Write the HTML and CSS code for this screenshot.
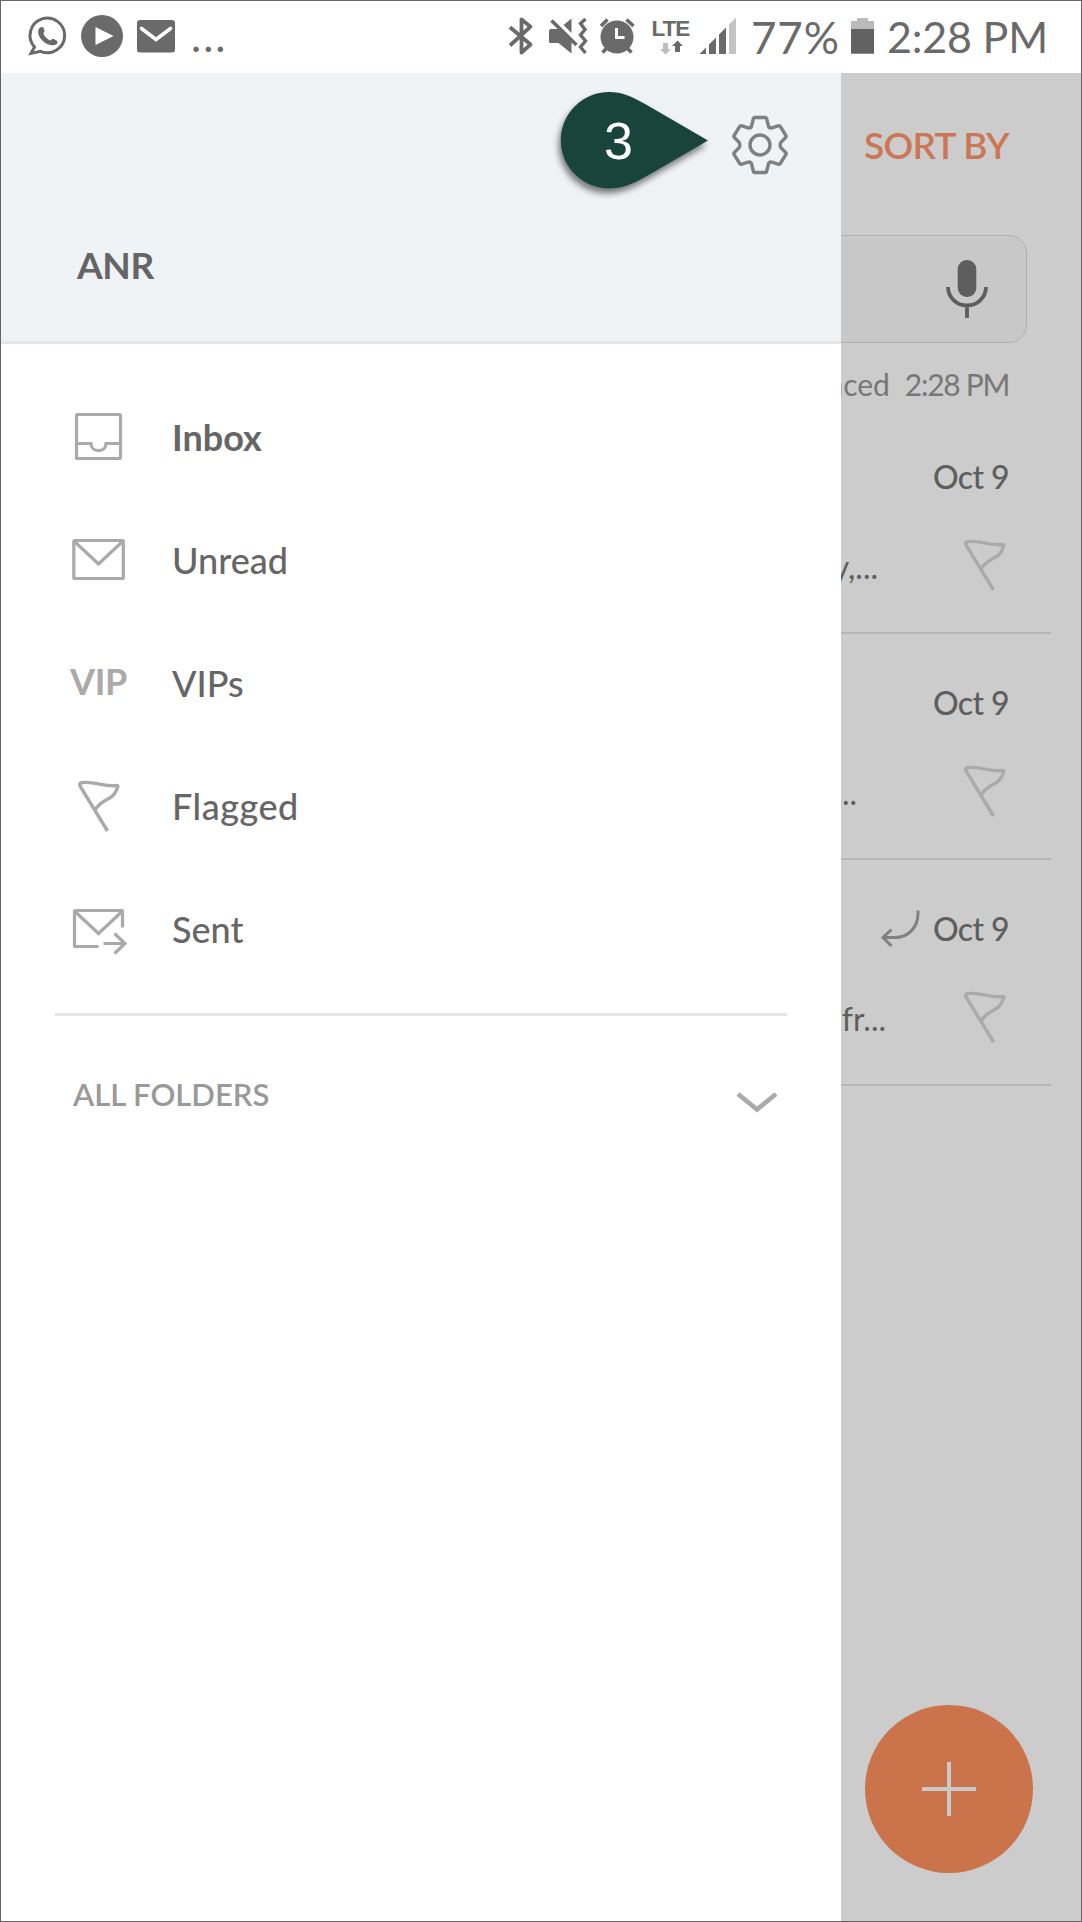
FILE: index.html
```
<!DOCTYPE html>
<html lang="en">
<head>
	<meta charset="utf-8">
	<title>Email</title>
	<link rel="stylesheet" href="styles.css">
</head>
<body>
	<svg class="defs" width="0" height="0">
		<symbol id="flag" viewBox="0 0 46 56">
			<path d="M32.5 52 L5 7 Q3.500 3.700 8 3.500 C22 2.500 28 8 42 6.500 Q43.500 6.500 42.500 8.500 C38 23 28 18 20.500 30.500"/>
		</symbol>
	</svg>
	<div class="phone">
		<div class="statusbar">
			<div class="notify">
				<!-- whatsapp -->
				<svg width="46" height="72" viewBox="26 1 46 72">
					<path d="M34.500 47 A17.300 17.300 0 1 1 40.500 51.300 L31 53.400 Z" fill="none" stroke="#6a6a6a" stroke-width="3"/>
					<path d="M38.500 29.500 C39.500 27 42.500 26 43.500 28 C45 31 44.800 31.500 43.300 33.500 C44.500 36.500 47.500 39.500 50.500 40.500 C52.500 38.500 53 38.700 56 40.300 C58.500 41.500 57.500 44 55.500 44.800 C47 47.500 36 37 38.500 29.500 Z" fill="#6a6a6a"/>
				</svg>
				<svg width="60" height="72" viewBox="72 1 60 72">
					<circle cx="102" cy="36" r="21" fill="#6a6a6a"/>
					<path d="M95.500 27 L113.500 36 L95.500 45 Z" fill="#fff"/>
				</svg>
				<svg width="58" height="72" viewBox="132 1 58 72">
					<rect x="137" y="20" width="38" height="32.500" rx="3" fill="#6a6a6a"/>
					<path d="M141.500 28.500 L156 39.500 L170.500 28.500" fill="none" stroke="#fff" stroke-width="3.600" stroke-linecap="round"/>
				</svg>
				<span class="more">...</span>
			</div>
			<div class="system">
				<svg width="40" height="72" viewBox="505 1 40 72">
					<path d="M510 45.500 L530.500 26.700 L521.500 19.500 V52.500 L530.500 44.500 L510 27.300" fill="none" stroke="#6a6a6a" stroke-width="3.800" stroke-linejoin="round"/>
				</svg>
				<!-- muted, vibrate -->
				<svg width="52" height="72" viewBox="545 1 52 72">
					<path d="M551 29 H560 L571.500 41 V53.500 L558.500 43 H550.500 Q549 43 549 41.500 V31 Q549 29 551 29 Z M571.500 18.500 V33 L563.500 25 Z" fill="#6a6a6a"/>
					<path d="M551.500 20.500 L576.500 45" fill="none" stroke="#6a6a6a" stroke-width="3.600"/>
					<path d="M585.500 19 L580.500 23.500 L585 29.500 L580.500 35 L585.500 41 L580.500 47 L585.500 53" fill="none" stroke="#6a6a6a" stroke-width="3.400"/>
				</svg>
				<svg width="47" height="72" viewBox="597 1 47 72">
					<circle cx="617" cy="37" r="16.500" fill="#6a6a6a"/>
					<path d="M601 26 L607.500 19.500 M626.500 19.500 L633.500 26 M607 48 L602.500 52.500 M627 48 L631.500 52.500" stroke="#6a6a6a" stroke-width="3.600"/>
					<path d="M616.500 28 V37.500 H624.500" fill="none" stroke="#fff" stroke-width="3"/>
				</svg>
				<svg width="52" height="72" viewBox="644 1 52 72">
					<text class="lte" x="651.500" y="36">LTE</text>
					<path d="M663 43 h5 v6 h3 l-5.500 5.500 l-5.500 -5.500 h3 Z" fill="#bdbdbd"/>
					<path d="M675 52 h5 v-6 h3 l-5.500 -5.500 l-5.500 5.500 h3 Z" fill="#6a6a6a"/>
				</svg>
				<svg width="55" height="72" viewBox="696 1 55 72">
					<path d="M699.500 54 L706 47.500 V54 Z M709 54 V44.500 L716 37.500 V54 Z M719 54 V34.500 L726 27.500 V54 Z" fill="#6a6a6a"/>
					<path d="M729 54 V24.500 L736 17.500 V54 Z" fill="#c3c3c3"/>
				</svg>
				<span class="percent">77%</span>
				<svg width="38" height="72" viewBox="845 1 38 72">
					<path d="M857 18 H868 V21 H874 V54 H851 V21 H857 Z" fill="#bababa"/>
					<rect x="851" y="29" width="23" height="24.500" fill="#626262"/>
				</svg>
				<span class="clock">2:28 PM</span>
			</div>
		</div>

		<div class="main">
			<div class="drawer">
				<div class="account">
					<div class="tools">
						<svg class="gear" width="64" height="64" viewBox="728 113 64 64">
							<path d="M755 117.500 H765 Q766.500 117.500 766.700 119 L768.300 125.500 Q769 128.500 772 127.800 L778 125.800 Q779.500 125.400 780.300 126.500 L785.800 135.300 Q786.600 136.500 785.600 137.500 L781.200 142 Q779 145 781.200 148 L785.600 152.500 Q786.600 153.500 785.800 154.700 L780.300 163.500 Q779.500 164.600 778 164.200 L772 162.200 Q769 161.500 768.300 164.500 L766.700 171 Q766.500 172.500 765 172.500 H755 Q753.500 172.500 753.300 171 L751.700 164.500 Q751 161.500 748 162.200 L742 164.200 Q740.500 164.600 739.700 163.500 L734.200 154.700 Q733.400 153.500 734.400 152.500 L738.800 148 Q741 145 738.800 142 L734.400 137.500 Q733.400 136.500 734.200 135.300 L739.700 126.500 Q740.500 125.400 742 125.800 L748 127.800 Q751 128.500 751.700 125.500 L753.300 119 Q753.500 117.500 755 117.500 Z"/>
							<circle cx="760" cy="145" r="10"/>
						</svg>
					</div>
					<div class="name">ANR</div>
				</div>
				<ul class="menu">
					<li class="active">
						<svg class="icon" width="64" height="63" viewBox="0 0 64 63">
							<rect x="12.500" y="8.500" width="44" height="44" rx="1"/>
							<path d="M12.500 37.500 H27 C27 47 42 47 42 37.500 H56.500"/>
						</svg>
						<span>Inbox</span>
					</li>
					<li>
						<svg class="icon" width="64" height="63" viewBox="0 0 64 63">
							<rect x="9.800" y="11.500" width="49.500" height="38" rx="1"/>
							<path d="M10.500 12.500 L34.500 35 L58.500 12.500"/>
						</svg>
						<span>Unread</span>
					</li>
					<li>
						<b class="vip">VIP</b>
						<span>VIPs</span>
					</li>
					<li>
						<svg class="icon flag" width="64" height="63" viewBox="0 0 64 63">
							<use href="#flag" x="11" y="4" width="46" height="56"/>
						</svg>
						<span class="wide">Flagged</span>
					</li>
					<li>
						<svg class="icon" width="64" height="63" viewBox="0 0 64 63">
							<path d="M34.500 48.500 H11.500 Q10.500 48.500 10.500 47.500 V13 Q10.500 12.500 11.500 12.500 H57.500 Q58.500 12.500 58.500 13 V29.500"/>
							<path d="M11 13.500 L34.500 35.500 L58 13.500"/>
							<path d="M39.500 45.500 H61 M50.500 35.500 L61 45.500 L50.500 55.500"/>
						</svg>
						<span>Sent</span>
					</li>
				</ul>
				<div class="folders">
					<span>ALL FOLDERS</span>
					<svg width="42" height="24" viewBox="0 0 42 24">
						<path d="M2 3 L21 18.500 L40 3" fill="none" stroke="#aaa" stroke-width="4.600"/>
					</svg>
				</div>
				<!-- step marker -->
				<div class="pin">
					<svg width="170" height="120" viewBox="550 82 170 120">
						<path d="M707 140.500 L645 104.500 C631 96.500 621 92 608 92 A48 48 0 0 0 608 188.500 C621 188.500 631 184.500 645 176.500 Z" fill="#19443b"/>
					</svg>
					<span>3</span>
				</div>
			</div>

			<div class="list">
				<div class="sort">SORT BY</div>
				<div class="search">
					<svg width="48" height="64" viewBox="943 257 48 64">
						<rect x="957.700" y="260" width="18.600" height="37" rx="9" fill="#5e5e5e"/>
						<path d="M948 287 A19 18.500 0 0 0 986 287 M967 305.500 V318" fill="none" stroke="#5e5e5e" stroke-width="3.800"/>
					</svg>
				</div>
				<div class="synced"><span>Last synced</span><span class="time">2:28 PM</span></div>
				<div class="mail">
					<div class="date">Oct 9</div>
					<div class="preview">
						<span class="p1">today,...</span>
						<svg class="flag" width="46" height="56"><use href="#flag"/></svg>
					</div>
				</div>
				<div class="mail">
					<div class="date">Oct 9</div>
					<div class="preview">
						<span class="p2">...</span>
						<svg class="flag" width="46" height="56"><use href="#flag"/></svg>
					</div>
				</div>
				<div class="mail">
					<div class="date">
						<svg width="44" height="44" viewBox="879 907 44 44">
							<path d="M918 911.500 V914 C918 929 908 938.500 895 938.500 H883 M891.500 930.500 L883 938.500 L891.500 947" fill="none" stroke="#808080" stroke-width="3"/>
						</svg>
						Oct 9
					</div>
					<div class="preview">
						<span class="p3">fr...</span>
						<svg class="flag" width="46" height="56"><use href="#flag"/></svg>
					</div>
				</div>
				<div class="compose">
					<svg width="54" height="54" viewBox="0 0 54 54">
						<path d="M27 0 V54 M0 27 H54" stroke="#cacaca" stroke-width="4"/>
					</svg>
				</div>
			</div>
		</div>
	</div>
</body>
</html>
```
FILE: styles.css
```
*{
	margin: 0;
	padding: 0;
	box-sizing: border-box;
}
body{
	font-family: Lato, "Noto Sans", sans-serif;
	background: #fff;
	color: #666;
}
svg{
	display: block;
	flex: none;
}
.defs{
	position: absolute;
}
.phone{
	display: flex;
	flex-direction: column;
	width: 1082px;
	height: 1922px;
	border: 1px solid #666;
	overflow: hidden;
}

/* status bar */
.statusbar{
	display: flex;
	justify-content: space-between;
	height: 72px;
	flex: none;
	padding: 0 33px 0 25px;
	color: #6a6a6a;
	font-size: 43px;
	line-height: 72px;
	white-space: nowrap;
}
.notify,
.system{
	display: flex;
}
.more{
	padding-left: 1px;
	letter-spacing: 2px;
	line-height: 70px;
}
.percent{
	width: 94px;
	font-size: 44px;
	letter-spacing: 0.8px;
}
.clock{
	width: 165px;
	padding-left: 4px;
	letter-spacing: -0.2px;
}
.lte{
	font: bold 22.5px "Liberation Sans", sans-serif;
	letter-spacing: -1px;
	fill: #6a6a6a;
}

.main{
	display: flex;
	flex: 1;
}

/* drawer */
.drawer{
	position: relative;
	width: 840px;
	background: #fff;
}
.account{
	height: 271px;
	background: #eff3f6;
	border-bottom: 3px solid #e5e5e5;
	padding: 40px 49px 0 76px;
}
.tools{
	display: flex;
	justify-content: flex-end;
}
.gear{
	fill: none;
	stroke: #808080;
	stroke-width: 3.4;
}
.name{
	margin-top: 66px;
	font-size: 37px;
	font-weight: bold;
	line-height: 44px;
	letter-spacing: -0.4px;
	color: #656565;
}
.menu{
	list-style: none;
	padding: 32px 54px 0 63px;
}
.menu li{
	display: flex;
	align-items: center;
	height: 123px;
	font-size: 36px;
	font-weight: 500;
}
.menu span{
	margin: -2px 0 0 44px;
}
.menu .wide{
	letter-spacing: 0.5px;
}
.menu .active{
	font-weight: bold;
}
.icon{
	fill: none;
	stroke: #aaa;
	stroke-width: 3.2;
}
.flag{
	fill: none;
	stroke: #aaa;
	stroke-width: 3.4;
}
.vip{
	width: 64px;
	padding: 0 0 6px 6px;
	letter-spacing: -0.3px;
	color: #aaa;
}
.folders{
	display: flex;
	justify-content: space-between;
	margin: 22px 54px 0;
	padding: 59px 9px 0 18px;
	border-top: 3px solid #e5e5e5;
	color: #999;
	font-size: 31px;
	font-weight: 600;
	line-height: 38px;
}
.folders svg{
	margin-top: 16px;
}
.pin{
	position: absolute;
	left: 550px;
	top: 9px;
}
.pin svg{
	filter: drop-shadow(-2px 5px 3px rgba(0, 0, 0, 0.5));
}
.pin span{
	position: absolute;
	left: 53px;
	top: 29px;
	color: #fff;
	font: 52px/60px "Liberation Sans", sans-serif;
}

/* mail list under the dimmed layer */
.list{
	display: flex;
	flex-direction: column;
	width: 240px;
	background: #ccc;
	overflow: hidden;
}
.sort{
	padding: 49px 0 0 23px;
	color: #cb7654;
	font-size: 37px;
	font-weight: 600;
	line-height: 46px;
	letter-spacing: -0.7px;
	white-space: nowrap;
}
.search{
	display: flex;
	justify-content: flex-end;
	align-items: center;
	width: 260px;
	height: 108px;
	margin: 67px 0 0 -74px;
	padding-right: 35px;
	background: #c8c8c8;
	border: 1px solid #b0b0b0;
	border-radius: 18px;
}
.synced{
	display: flex;
	justify-content: flex-end;
	gap: 15px;
	height: 65px;
	padding: 23px 72px 0 0;
	color: #777;
	font-size: 30px;
	line-height: 36px;
	white-space: nowrap;
}
.time{
	letter-spacing: -1.3px;
}
.mail{
	width: 210px;
	height: 226px;
	border-bottom: 2px solid #b6b6b6;
	padding-right: 42px;
	color: #5e5e5e;
}
.date{
	display: flex;
	justify-content: flex-end;
	align-items: center;
	gap: 10px;
	height: 44px;
	margin-top: 46px;
	font-size: 32px;
	font-weight: 500;
	letter-spacing: -0.6px;
	white-space: nowrap;
}
.preview{
	display: flex;
	justify-content: flex-end;
	margin: 40px 2px 0 0;
	font-size: 32px;
	line-height: 57px;
}
.preview span{
	flex: none;
}
.p1{
	margin-right: 83px;
}
.p2{
	margin-right: 104px;
}
.p3{
	margin-right: 75px;
}
.compose{
	display: flex;
	justify-content: center;
	align-items: center;
	width: 168px;
	height: 168px;
	flex: none;
	margin: auto 0 48px 24px;
	border-radius: 50%;
	background: #cb734a;
}
```
